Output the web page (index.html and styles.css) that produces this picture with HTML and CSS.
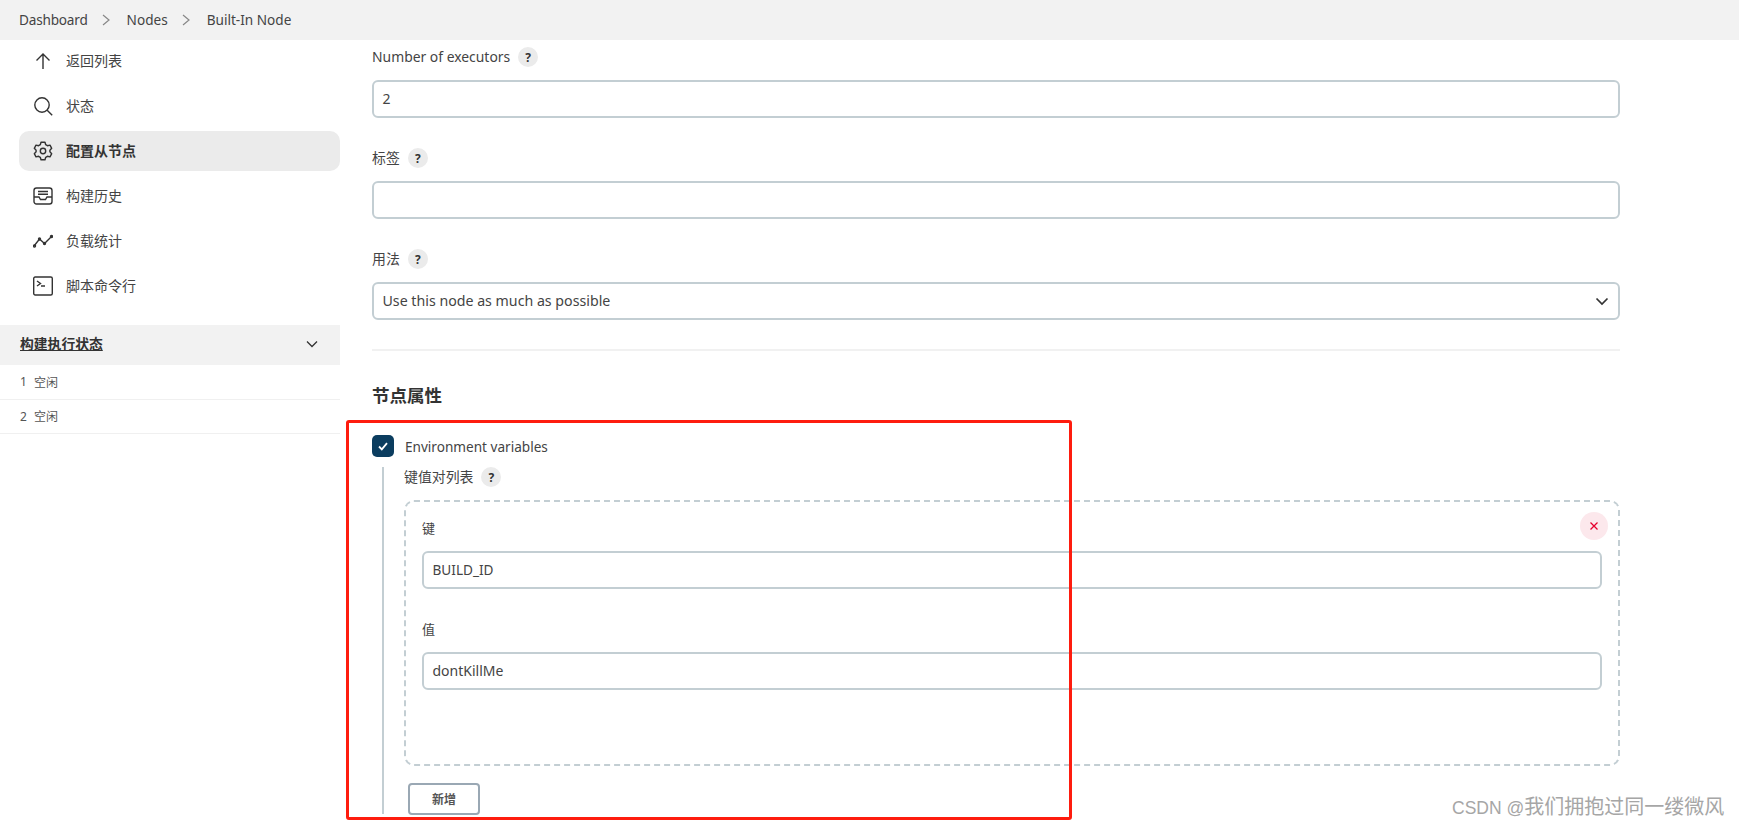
FILE: index.html
```html
<!DOCTYPE html>
<html lang="zh">
<head>
<meta charset="utf-8">
<title>Built-In Node</title>
<link rel="stylesheet" href="styles.css">
</head>
<body>
<nav class="crumbs">
  <span class="crumb-first">Dashboard</span>
  <svg class="crumb-sep" viewBox="0 0 10 14"><path d="M2 2l6 5-6 5"/></svg>
  <span>Nodes</span>
  <svg class="crumb-sep" viewBox="0 0 10 14"><path d="M2 2l6 5-6 5"/></svg>
  <span>Built-In Node</span>
</nav>
<div class="layout">
  <aside class="side">
    <ul class="tasks">
      <li class="task"><svg class="ico" viewBox="0 0 20 20"><path d="M10 18V3M3.500 9.500L10 3l6.500 6.500"/></svg>返回列表</li>
      <li class="task"><svg class="ico" viewBox="0 0 20 20"><circle cx="9" cy="9" r="7.200"/><path d="M14.200 14.200l5 5"/></svg>状态</li>
      <li class="task active"><svg class="ico" viewBox="0 0 20 20"><path d="M8 1.200h4l.7 2.500 1.700 1 2.600-.6 1.700 3.200-1.800 1.900v1.600l1.800 1.900-1.700 3.200-2.600-.6-1.700 1-.7 2.500H8l-.7-2.500-1.700-1-2.600.6-1.700-3.200 1.800-1.900V9.200L1.300 7.300 3 4.100l2.600.6 1.700-1z" stroke-linejoin="round"/><circle cx="10" cy="10" r="2.700"/></svg>配置从节点</li>
      <li class="task"><svg class="ico" viewBox="0 0 20 20"><rect x="1" y="2" width="18" height="16" rx="2.500"/><path d="M1 11h5l1.500 2.500h5L14 11h5M5 5.500h10M5 8.200h10"/></svg>构建历史</li>
      <li class="task"><svg class="ico" viewBox="0 0 20 20"><path d="M1 15l5.500-7 5 4.500L19 5"/><circle cx="1.500" cy="15" r="1"/><circle cx="6.500" cy="8" r="1"/><circle cx="11.500" cy="12.500" r="1"/><circle cx="18.500" cy="5.500" r="1"/></svg>负载统计</li>
      <li class="task"><svg class="ico" viewBox="0 0 20 20"><rect x="0.700" y="1" width="18.600" height="18" rx="1.500"/><path d="M4 5l3.500 2.500L4 10M8 10h4"/></svg>脚本命令行</li>
    </ul>
    <section class="panel">
      <header class="panel-head">
        <a class="panel-title">构建执行状态</a>
        <svg class="panel-chev" viewBox="0 0 12 8"><path d="M1 1.500l5 5 5-5"/></svg>
      </header>
      <div class="exec"><span class="exec-n">1</span>空闲</div>
      <div class="exec"><span class="exec-n">2</span>空闲</div>
    </section>
  </aside>
  <main class="main">
    <div class="field">
      <div class="label">Number of executors <span class="help">?</span></div>
      <div class="input">2</div>
    </div>
    <div class="field">
      <div class="label">标签 <span class="help">?</span></div>
      <div class="input"></div>
    </div>
    <div class="field">
      <div class="label">用法 <span class="help">?</span></div>
      <div class="input select">Use this node as much as possible
        <svg class="select-chev" viewBox="0 0 14 9"><path d="M1.500 1.500L7 7l5.500-5.500"/></svg>
      </div>
    </div>
    <hr class="rule">
    <h2 class="section">节点属性</h2>
    <div class="check-row"><span class="check"><svg viewBox="0 0 12 12"><path d="M2 6.500l2.800 2.800L10 3.200"/></svg></span>Environment variables</div>
    <div class="nested">
      <div class="label nested-label">键值对列表 <span class="help">?</span></div>
      <div class="repeat">
        <button class="close" type="button"><svg viewBox="0 0 10 10"><path d="M1.500 1.500l7 7M8.500 1.500l-7 7"/></svg></button>
        <div class="inner-label">键</div>
        <div class="input input-caps">BUILD_ID</div>
        <div class="inner-label second">值</div>
        <div class="input">dontKillMe</div>
      </div>
      <button class="add" type="button">新增</button>
    </div>
  </main>
</div>
<div class="annotation"></div>
<div class="watermark">CSDN @<span class="wm-cjk">我们拥抱过同一缕微风</span></div>
</body>
</html>
```
FILE: styles.css
```css
* { box-sizing: border-box; }
html, body { margin: 0; padding: 0; height: 829px; overflow: hidden; background: #fff; }
body { font-family: "Noto Sans", "Noto Sans CJK SC", sans-serif; font-size: 14px; color: #333; position: relative; }

.crumbs { height: 40px; background: #f2f2f2; display: flex; align-items: center; padding-left: 19px; padding-bottom: 1px; color: #444; font-size: 13.600px; }
.crumb-first { letter-spacing: -0.200px; }
.crumb-sep { width: 10px; height: 14px; margin: 0 16px 0 13px; fill: none; stroke: #888; stroke-width: 1.200; }

.layout { display: flex; }
.side { width: 340px; flex: none; }
.tasks { list-style: none; margin: 0; padding: 1px 0 0 19px; display: flex; flex-direction: column; gap: 5px; }
.task { height: 40px; display: flex; align-items: center; padding: 0 0 2px 14px; border-radius: 10px; font-size: 14px; color: #444; }
.task.active { background: #ebebeb; font-weight: 700; color: #333; }
.ico { width: 20px; height: 20px; margin: 2px 13px 0 0; flex: none; fill: none; stroke: #333; stroke-width: 1.400; }

.panel { margin-top: 19px; }
.panel-head { height: 40px; background: #f2f2f2; display: flex; align-items: center; justify-content: space-between; padding: 0 22px 4px 20px; }
.panel-title { font-size: 13.800px; font-weight: 700; text-decoration: underline; color: #333; }
.panel-chev { width: 12px; height: 8px; margin-top: 2px; fill: none; stroke: #333; stroke-width: 1.300; }
.exec { height: 34.500px; display: flex; align-items: center; padding-left: 20px; font-size: 12px; color: #555; border-bottom: 1px solid #f0f0f0; }
.exec-n { width: 14px; }

.main { width: 1280px; padding-left: 32px; }
.field { height: 101px; padding-top: 5px; }
.label { height: 24px; display: flex; align-items: center; gap: 8px; color: #444; font-size: 13.900px; margin-bottom: 11px; padding-bottom: 2px; }
.help { width: 20px; height: 20px; margin-top: 2px; border-radius: 50%; background: #ebebeb; display: inline-flex; align-items: center; justify-content: center; font-size: 12px; font-weight: 700; color: #333; }
.input { height: 38px; border: 2px solid #c3ced3; border-radius: 6px; background: #fff; display: flex; align-items: center; padding: 0 0 2px 8.500px; font-size: 14px; color: #444; position: relative; }
.input-caps { font-size: 13.600px; }
.select { justify-content: space-between; padding-right: 9px; font-size: 14.200px; }
.select-chev { width: 14px; height: 9px; margin-top: 2px; fill: none; stroke: #333; stroke-width: 1.700; }
.rule { border: 0; border-top: 2px solid #f1f1f1; margin: 6px 0 0; }
.section { margin: 0; height: 44px; padding-top: 22px; line-height: 44px; font-size: 17.500px; font-weight: 700; color: #333; }
.check-row { margin-top: 40px; height: 22px; display: flex; align-items: center; gap: 11px; color: #444; font-size: 13.600px; }
.check { width: 22px; height: 22px; border-radius: 5px; background: #0b3d5f; display: flex; align-items: center; justify-content: center; }
.check svg { width: 12px; height: 12px; fill: none; stroke: #fff; stroke-width: 1.800; }
.nested { margin: 10px 0 0 10px; padding-left: 20px; border-left: 2px solid #c3ced3; height: 347px; }
.nested-label { height: 20px; margin-bottom: 13px; }
.repeat { height: 266px; border: 2px dashed #c3ced3; border-radius: 10px; padding: 16px 16px 0; position: relative; margin-bottom: 17px; }
.inner-label { height: 20px; margin-bottom: 13px; font-size: 13px; color: #444; line-height: 20px; }
.inner-label.second { margin-top: 30px; }
.close { position: absolute; top: 10px; right: 10px; width: 28px; height: 28px; border: 0; border-radius: 50%; padding: 0; background: #fce8ec; display: flex; align-items: center; justify-content: center; }
.close svg { width: 10px; height: 10px; fill: none; stroke: #e6002d; stroke-width: 1.300; }
.add { display: block; width: 72px; height: 32px; margin-left: 4px; border: 2px solid #9aa8b4; border-radius: 4px; background: #fff; font-family: inherit; font-size: 12px; font-weight: 700; color: #555; padding: 0; }

.annotation { position: absolute; left: 346px; top: 420px; width: 726px; height: 400px; border: 3px solid #fe1c0e; border-radius: 3px; pointer-events: none; }
.watermark { position: absolute; left: 1452px; top: 793px; font-family: "Liberation Sans", "Noto Sans CJK SC", sans-serif; font-size: 17.500px; line-height: 28px; color: #a6a6a6; white-space: nowrap; }
.wm-cjk { font-size: 20px; }
```
